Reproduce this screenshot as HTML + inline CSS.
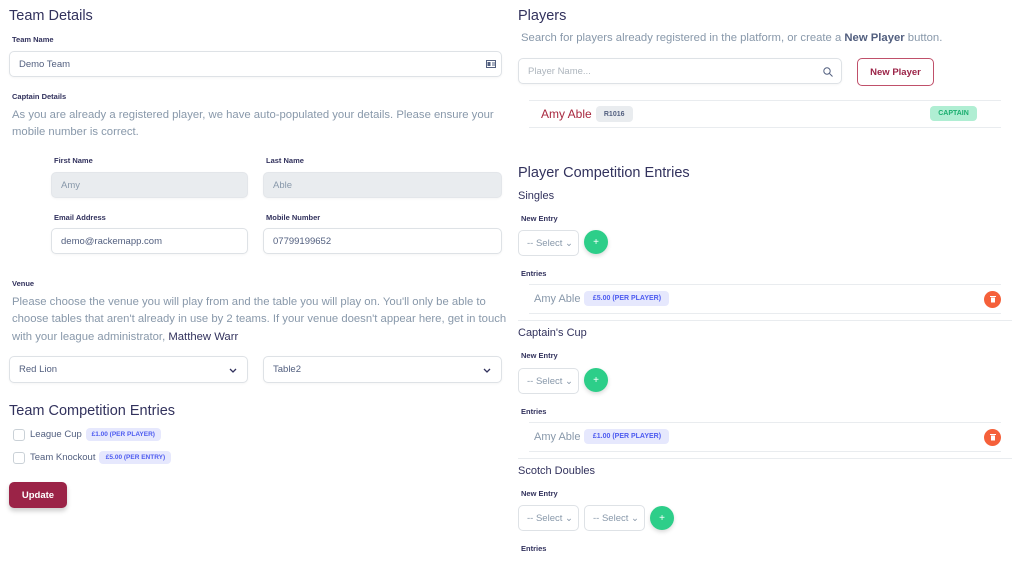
<!DOCTYPE html>
<html><head><meta charset="utf-8"><style>
*{box-sizing:border-box;margin:0;padding:0}
body{width:1024px;height:563px;background:#fff;font-family:"Liberation Sans",sans-serif;position:relative;overflow:hidden;color:#32325d}
.a{position:absolute;white-space:nowrap}
.h{font-size:14.5px;color:#32325d}
.lbl{font-size:7.5px;font-weight:bold;color:#32325d}
.p{font-size:11.3px;color:#8898aa;line-height:17.3px;white-space:normal}
.in{position:absolute;border:1px solid #dee2e6;border-radius:5px;background:#fff;font-size:9.5px;color:#525f7f;padding-left:9px;display:flex;align-items:center;box-shadow:0 1px 2px rgba(0,0,0,.04)}
.gray{background:#e9ecef;border-color:#e3e6ea;color:#8898aa}
.bdg{border-radius:4px;font-size:7px;font-weight:bold;display:inline-flex;align-items:center;justify-content:center}
.ab{position:absolute}
.blue{background:#e6e8fd;color:#4d5bf0}
.sel{position:absolute;width:61px;height:26px;border:1px solid #dee2e6;border-radius:5px;font-size:9.5px;color:#8898aa;display:flex;align-items:center;padding-left:8px}
.g{position:absolute;width:24px;height:24px;border-radius:50%;background:#2dce89;color:#fff;font-size:10px;display:flex;align-items:center;justify-content:center;box-shadow:0 2px 4px rgba(0,0,0,.15)}
.r{position:absolute;width:17px;height:17px;border-radius:50%;background:#f5603a;display:flex;align-items:center;justify-content:center}
.line{position:absolute;height:1px;background:#e9ecef}
.sub{font-size:11px;color:#32325d}
.chk{position:absolute;width:12px;height:12px;border:1px solid #cad1d7;border-radius:3px;background:#fff}
.row{position:absolute;display:flex;align-items:center;white-space:nowrap}
</style></head><body>
<div class="a h" style="left:9px;top:8px">Team Details</div>
<div class="a lbl" style="left:12px;top:35px">Team Name</div>
<div class="in" style="left:9px;top:51px;width:493px;height:26px">Demo Team
<svg style="position:absolute;right:5px;top:8px" width="10" height="8" viewBox="0 0 10 8"><rect x="0.5" y="0.5" width="9" height="7" fill="none" stroke="#525f7f"/><rect x="1.5" y="2" width="3" height="4" fill="#525f7f"/><line x1="6" y1="3" x2="9" y2="3" stroke="#525f7f"/><line x1="6" y1="5" x2="9" y2="5" stroke="#525f7f"/></svg></div>
<div class="a lbl" style="left:12px;top:92px">Captain Details</div>
<div class="a p" style="left:12px;top:107px;width:500px">As you are already a registered player, we have auto-populated your details. Please ensure your mobile number is correct.</div>
<div class="a lbl" style="left:54px;top:156px">First Name</div>
<div class="a lbl" style="left:266px;top:156px">Last Name</div>
<div class="in gray" style="left:51px;top:172px;width:197px;height:26px">Amy</div>
<div class="in gray" style="left:263px;top:172px;width:239px;height:26px">Able</div>
<div class="a lbl" style="left:54px;top:213px">Email Address</div>
<div class="a lbl" style="left:266px;top:213px">Mobile Number</div>
<div class="in" style="left:51px;top:228px;width:197px;height:26px">demo@rackemapp.com</div>
<div class="in" style="left:263px;top:228px;width:239px;height:26px">07799199652</div>
<div class="a lbl" style="left:12px;top:279px">Venue</div>
<div class="a p" style="left:12px;top:294px;width:505px">Please choose the venue you will play from and the table you will play on. You'll only be able to choose tables that aren't already in use by 2 teams. If your venue doesn't appear here, get in touch with your league administrator, <span style="color:#32325d">Matthew Warr</span></div>
<div class="in" style="left:9px;top:356px;width:239px;height:27px">Red Lion<svg style="position:absolute;right:10px;top:11px" width="8" height="5"><path d="M1 1L4 4L7 1" fill="none" stroke="#32325d" stroke-width="1.3"/></svg></div>
<div class="in" style="left:263px;top:356px;width:239px;height:27px">Table2<svg style="position:absolute;right:10px;top:11px" width="8" height="5"><path d="M1 1L4 4L7 1" fill="none" stroke="#32325d" stroke-width="1.3"/></svg></div>
<div class="a h" style="left:9px;top:403px">Team Competition Entries</div>
<div class="chk" style="left:13px;top:429px"></div>
<div class="row" style="left:30px;top:428px;font-size:9.5px;color:#525f7f">League Cup<span class="bdg blue" style="margin-left:4px;width:75px;height:13px;font-size:6.5px">£1.00 (PER PLAYER)</span></div>
<div class="chk" style="left:13px;top:452px"></div>
<div class="row" style="left:30px;top:451px;font-size:9.5px;color:#525f7f">Team Knockout<span class="bdg blue" style="margin-left:4px;width:72px;height:13px;font-size:6.5px">£5.00 (PER ENTRY)</span></div>
<div class="a" style="left:9px;top:482px;width:58px;height:26px;background:#9b2347;border-radius:5px;color:#fff;font-size:9.5px;font-weight:bold;display:flex;align-items:center;justify-content:center;box-shadow:0 3px 5px rgba(0,0,0,.2)">Update</div>

<div class="a h" style="left:518px;top:8px">Players</div>
<div class="a p" style="left:521px;top:30px">Search for players already registered in the platform, or create a <b style="color:#525f7f">New Player</b> button.</div>
<div class="in" style="left:518px;top:58px;width:324px;height:26px;color:#adb5bd">Player Name...
<svg style="position:absolute;right:8px;top:8px" width="10" height="10"><circle cx="4" cy="4" r="3.2" fill="none" stroke="#525f7f" stroke-width="1"/><line x1="6.5" y1="6.5" x2="9.5" y2="9.5" stroke="#525f7f"/></svg></div>
<div class="a" style="left:857px;top:58px;width:77px;height:28px;border:1px solid #c0506a;border-radius:5px;color:#9b2347;font-size:9.5px;font-weight:bold;display:flex;align-items:center;justify-content:center">New Player</div>
<div class="line" style="left:529px;top:100px;width:472px"></div>
<div class="line" style="left:529px;top:127px;width:472px"></div>
<div class="row" style="left:541px;top:106px;font-size:12px;color:#a8283f">Amy Able<span class="bdg" style="margin-left:4px;width:37px;height:16px;background:#e9ecef;color:#525f7f">R1016</span></div>
<div class="bdg ab" style="left:930px;top:106px;width:47px;height:15px;background:#b0eed3;color:#1aae6f">CAPTAIN</div>

<div class="a h" style="left:518px;top:165px">Player Competition Entries</div>
<div class="a sub" style="left:518px;top:190px">Singles</div>
<div class="a lbl" style="left:521px;top:214px">New Entry</div>
<div class="sel" style="left:518px;top:230px">-- Select ⌄</div>
<div class="g" style="left:584px;top:230px">+</div>
<div class="a lbl" style="left:521px;top:269px">Entries</div>
<div class="line" style="left:529px;top:284px;width:472px"></div>
<div class="line" style="left:529px;top:313px;width:472px"></div>
<div class="row" style="left:534px;top:291px;font-size:11px;color:#8898aa">Amy Able<span class="bdg blue" style="margin-left:4px;width:85px;height:15px">£5.00 (PER PLAYER)</span></div>
<div class="r" style="left:984px;top:291px"><svg width="6" height="7"><rect x="1" y="1.5" width="4" height="5" fill="#fff"/><rect x="0" y="0" width="6" height="1" fill="#fff"/></svg></div>
<div class="line" style="left:518px;top:320px;width:494px"></div>
<div class="a sub" style="left:518px;top:327px">Captain's Cup</div>
<div class="a lbl" style="left:521px;top:351px">New Entry</div>
<div class="sel" style="left:518px;top:368px">-- Select ⌄</div>
<div class="g" style="left:584px;top:368px">+</div>
<div class="a lbl" style="left:521px;top:407px">Entries</div>
<div class="line" style="left:529px;top:422px;width:472px"></div>
<div class="line" style="left:529px;top:451px;width:472px"></div>
<div class="row" style="left:534px;top:429px;font-size:11px;color:#8898aa">Amy Able<span class="bdg blue" style="margin-left:4px;width:85px;height:15px">£1.00 (PER PLAYER)</span></div>
<div class="r" style="left:984px;top:429px"><svg width="6" height="7"><rect x="1" y="1.5" width="4" height="5" fill="#fff"/><rect x="0" y="0" width="6" height="1" fill="#fff"/></svg></div>
<div class="line" style="left:518px;top:458px;width:494px"></div>
<div class="a sub" style="left:518px;top:465px">Scotch Doubles</div>
<div class="a lbl" style="left:521px;top:489px">New Entry</div>
<div class="sel" style="left:518px;top:505px">-- Select ⌄</div>
<div class="sel" style="left:584px;top:505px">-- Select ⌄</div>
<div class="g" style="left:650px;top:506px">+</div>
<div class="a lbl" style="left:521px;top:544px">Entries</div>
</body></html>
